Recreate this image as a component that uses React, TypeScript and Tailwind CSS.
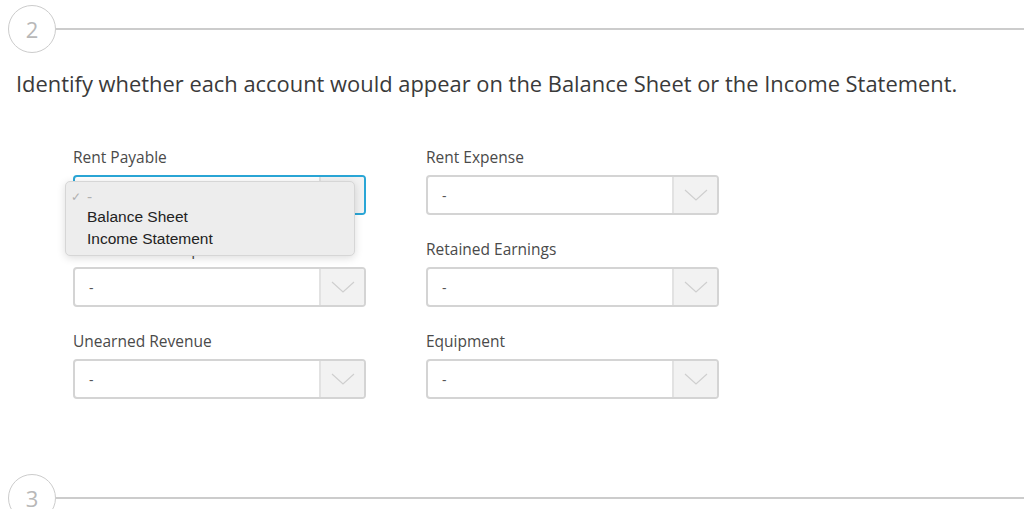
import React from 'react';

const font = { fontFamily: '"Open Sans", "Noto Sans", sans-serif' };

const Chevron: React.FC = () => (
  <svg width="24" height="12" viewBox="0 0 24 12" fill="none">
    <polyline points="1,1 12,11 23,1" stroke="#cfcfcf" strokeWidth="1.2" />
  </svg>
);

const Select: React.FC<{ active?: boolean }> = ({ active }) => (
  <div
    className={
      'flex h-10 w-full rounded-[4px] border-2 bg-white overflow-hidden ' +
      (active ? 'border-[#2aa6d6]' : 'border-[#d4d4d4]')
    }
  >
    <div className="flex flex-1 items-center pl-[14px] text-[14px] text-[#555]">-</div>
    <div className="flex w-[45px] items-center justify-center border-l-2 border-[#e2e2e2] bg-[#f2f2f2]">
      <Chevron />
    </div>
  </div>
);

const Field: React.FC<{ label: string; active?: boolean }> = ({ label, active }) => (
  <div className="flex flex-col">
    <div className="h-5 text-[15.5px] leading-5 text-[#4a4a4a]">{label}</div>
    <div className="mt-2">
      <Select active={active} />
    </div>
  </div>
);

const StepHeader: React.FC<{ n: number }> = ({ n }) => (
  <div className="flex items-center pl-2">
    <div className="flex h-12 w-12 shrink-0 items-center justify-center rounded-full border-[1.5px] border-[#cccccc] text-[22px] text-[#b8b8b8]">
      {n}
    </div>
    <div className="h-[1.5px] flex-1 bg-[#cccccc]" />
  </div>
);

export default function App() {
  return (
    <div className="relative h-[509px] w-[1024px] overflow-hidden bg-white" style={font}>
      <div className="pt-[5px]">
        <StepHeader n={2} />
      </div>
      <p className="mt-[17px] pl-4 text-[21.9px] leading-7 text-[#3a3a3a]">
        Identify whether each account would appear on the Balance Sheet or the Income Statement.
      </p>
      <div className="mt-[49px] grid w-fit grid-cols-[293px_293px] gap-x-[60px] gap-y-6 pl-[73px]">
        <Field label="Rent Payable" active />
        <Field label="Rent Expense" />
        <Field label="Accumulated Depreciation" />
        <Field label="Retained Earnings" />
        <Field label="Unearned Revenue" />
        <Field label="Equipment" />
      </div>
      <div className="mt-[75px]">
        <StepHeader n={3} />
      </div>

      {/* native select popup, open over the first field */}
      <div
        className="absolute left-[65px] top-[181px] flex h-[75px] w-[290px] flex-col rounded-[5px] border border-[#d6d6d6] bg-[#ededed] pt-[5px] text-[15.5px] text-[#222] shadow-[0_2px_8px_rgba(0,0,0,0.14)]"
        style={{ fontFamily: '"Liberation Sans", Arial, sans-serif' }}
      >
        <div className="flex h-[19px] items-center text-[#b0b0b0]">
          <span className="w-[21px] pl-[5px] text-[12px]">✓</span>
          <span>-</span>
        </div>
        <div className="flex h-[22px] items-center pl-[21px]">Balance Sheet</div>
        <div className="flex h-[22px] items-center pl-[21px]">Income Statement</div>
      </div>
    </div>
  );
}
